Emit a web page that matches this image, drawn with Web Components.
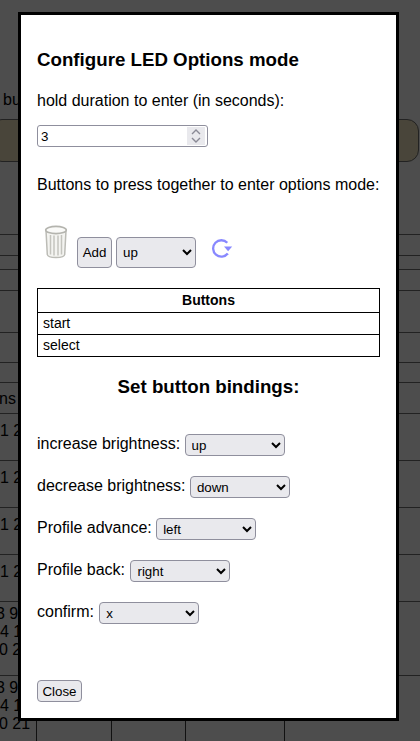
<!DOCTYPE html>
<html><head><meta charset="utf-8"><style>
html,body{margin:0;padding:0;height:741px;overflow:hidden;background:#4d4d4d;font-family:"Liberation Sans",Arial,sans-serif}
</style></head><body>
<page-backdrop></page-backdrop>
<led-dialog></led-dialog>
<script>
function def(name,html){customElements.define(name,class extends HTMLElement{constructor(){super();this.attachShadow({mode:'open'}).innerHTML=html(this)}})}
const ctl=`font:13.333px "Liberation Sans",Arial,sans-serif;background:#e9e9ed;border:1px solid #8f8f9d;border-radius:4px;color:#000;box-sizing:border-box;margin:0;`;
const sel=(w,h,val)=>`<select style='${ctl}width:${w}px;height:${h}px;padding:0 0 0 2px;flex:none'><option>${val}</option></select>`;
def('back-row',e=>`<style>:host{display:block;box-sizing:border-box;border-bottom:1px solid #222;overflow:hidden;white-space:nowrap;font-size:16px;line-height:18px;color:#000}</style><slot></slot>`);
def('page-backdrop',()=>`<style>:host{display:block;height:741px;overflow:hidden;background:#4d4d4d;color:#000;font-size:16px}
.bu{height:29px;padding:1px 0 0 3px;box-sizing:border-box;line-height:18px}
.top{height:90px}
.btn{margin-left:-10px;width:429px;height:43px;border:1px solid #222;border-radius:12px;background:#49453a;box-sizing:border-box}
.gap{height:73px;border-bottom:1px solid #222;box-sizing:border-box}
.l{display:block;white-space:nowrap}
.foot{height:65px;display:grid;grid-template-columns:37px 75px 74px 99px 1fr}
.foot div{border-right:1px solid #111}
.foot div:last-child{border:0}
.foot .n{white-space:nowrap;padding-top:3px;line-height:18px}
</style>
<div class="top"></div><div class="bu">bu</div><div class="btn"></div><div class="gap"></div>
<back-row style="height:21px"></back-row><back-row style="height:14px"></back-row><back-row style="height:21px"></back-row><back-row style="height:42px"></back-row><back-row style="height:30px"></back-row><back-row style="height:20px"></back-row>
<back-row style="height:31px;padding-top:7px"><span style="margin-left:-1px">ns</span></back-row>
<back-row style="height:47px;padding-top:8px"><span style="margin-left:-8.9px">21 2</span></back-row>
<back-row style="height:47px;padding-top:8px"><span style="margin-left:-8.9px">21 2</span></back-row>
<back-row style="height:47px;padding-top:8px"><span style="margin-left:-8.9px">21 2</span></back-row>
<back-row style="height:47px;padding-top:8px"><span style="margin-left:-8.9px">21 2</span></back-row>
<back-row style="height:74px;padding-top:3px"><span class="l" style="margin-left:-4px">3 9</span><span class="l">4 1</span><span class="l" style="margin-left:-1px">0 2</span></back-row>
<div class="foot"><div class="n"><span class="l" style="margin-left:-4px">3 9</span><span class="l">4 1</span><span class="l" style="margin-left:-1px">0 21</span></div><div></div><div></div><div></div><div></div></div>`);
def('icon-trash',()=>`<style>:host{display:block;width:24px;height:34px;flex:none}svg{display:block}</style><svg width="24" height="34" viewBox="0 0 24 34" fill="none"><path d="M2 5.500l1.300 24c.2 1.800 3.500 3 8.700 3s8.500-1.200 8.700-3l1.300-24" stroke="#bcbcb6" stroke-width="1.500" fill="#f4f4f1"/><path d="M6.500 10v19.500M10 10.500v20M14 10.500v20M17.500 10v19.500" stroke="#c4c4be" stroke-width="1.500"/><ellipse cx="12" cy="5" rx="10.300" ry="3.600" stroke="#b4b4ae" stroke-width="1.600" fill="#fafaf8"/></svg>`);
def('icon-refresh',()=>`<style>:host{display:block;width:22px;height:20px;flex:none}svg{display:block}</style><svg width="22" height="20" viewBox="0 0 22 20" fill="none"><path d="M16.300 3.800A8.200 8.200 0 1 0 16.800 14.500" stroke="#8888ff" stroke-width="2.300"/><path d="M13 7.500h8.200l-4.100 4.800z" fill="#8888ff"/></svg>`);
def('binding-row',e=>`<style>:host{display:flex;gap:4.4px;height:42px;font-size:16px;line-height:19px}select{margin-left:${e.getAttribute('nudge')||0}px !important}</style><span>${e.getAttribute('label')}</span>${sel(100,22,e.getAttribute('val'))}`);
def('num-field',()=>`<style>:host{display:flex;align-items:center;justify-content:space-between;${ctl}width:171px;height:22px;padding:0 2px 0 3px;background:#fff;border-radius:3px}svg{display:block;width:18px;height:18px;background:#e9e9ed}</style><span>3</span><svg viewBox="0 0 18 18" fill="none" stroke="#8a8a96" stroke-width="1.400"><path d="M5 7l4-4 4 4M5 11l4 4 4-4"/></svg>`);
def('led-dialog',()=>`<style>
:host{display:block;position:absolute;left:18px;top:12px;width:381px;height:709px;box-sizing:border-box;border:3px solid #000;background:#fff;color:#000;font-size:16px;padding:0 16px;overflow:hidden}
.p{line-height:19px}
h2{margin:0;font-size:18.72px;line-height:22px;font-weight:700}
table{border-collapse:collapse;width:343px;font-size:14px}
td,th{border:1px solid #000;padding:1px 5px;text-align:left;line-height:19px;height:19px}
th{text-align:center;padding:2px 5px}
.tools{display:flex;align-items:flex-start;height:43px}
button{${ctl}padding:0}
</style>
<h2 style="margin-top:34px">Configure LED Options mode</h2>
<div class="p" style="margin-top:20px">hold duration to enter (in seconds):</div>
<num-field style="margin-top:15px"></num-field>
<div class="p" style="margin-top:28px">Buttons to press together to enter options mode:</div>
<div class="tools" style="margin-top:31px"><icon-trash style="margin-left:7px"></icon-trash><button style="width:35px;height:31px;margin:12px 4px 0 9px">Add</button><select style='${ctl}width:80px;height:31px;padding:0 0 0 2px;margin-top:12px;flex:none'><option>up</option></select><icon-refresh style="margin:14px 0 0 15px"></icon-refresh></div>
<table style="margin-top:20px"><tr><th>Buttons</th></tr><tr><td>start</td></tr><tr><td>select</td></tr></table>
<h2 style="text-align:center;margin-top:19px">Set button bindings:</h2>
<binding-row style="margin-top:36px" val="up" label="increase brightness:"></binding-row>
<binding-row val="down" label="decrease brightness:"></binding-row>
<binding-row val="left" label="Profile advance:"></binding-row>
<binding-row val="right" nudge="1" label="Profile back:"></binding-row>
<binding-row val="x" nudge="1" label="confirm:"></binding-row>
<button style="margin-top:36px;width:45px;height:22px;display:block">Close</button>`);
</script>
</body></html>
